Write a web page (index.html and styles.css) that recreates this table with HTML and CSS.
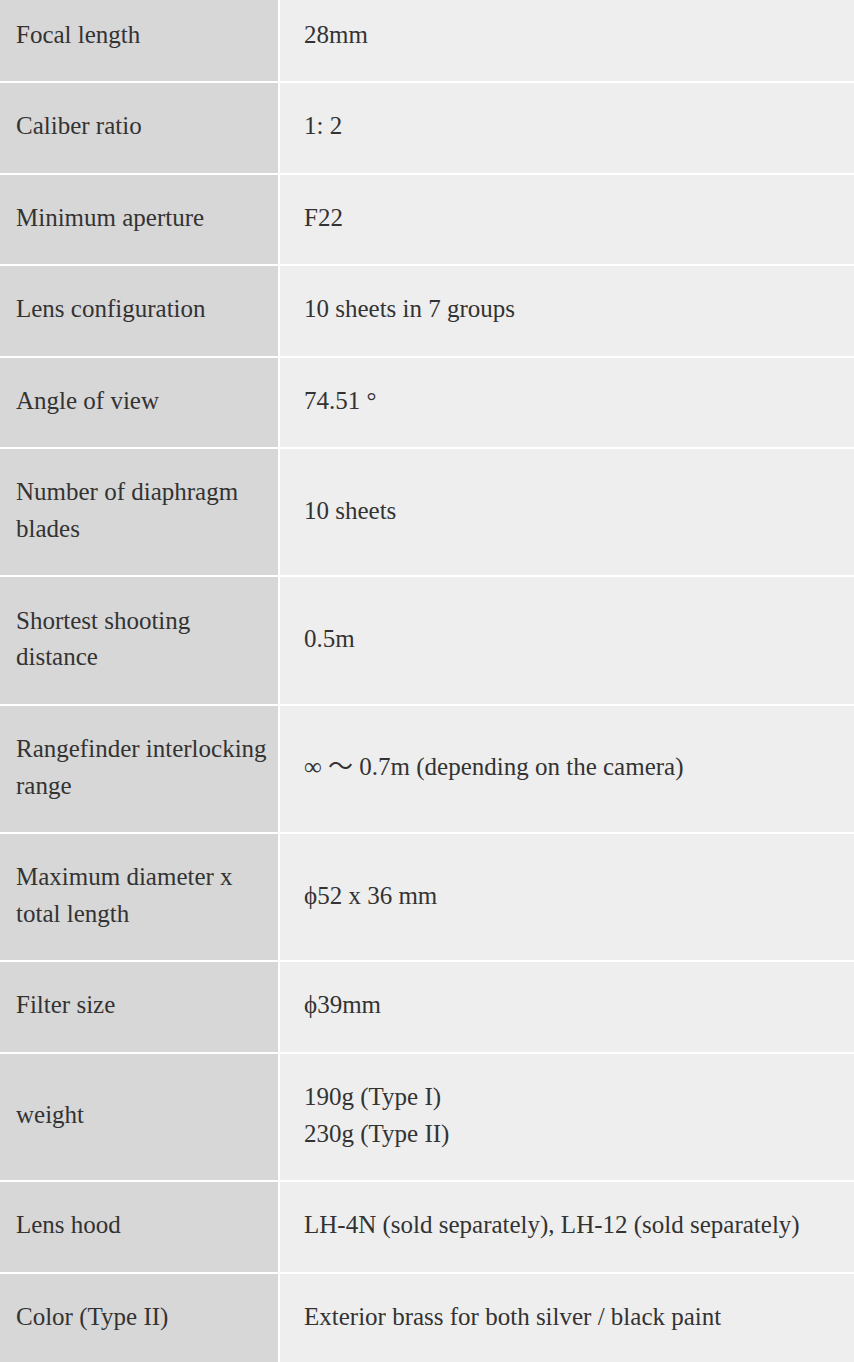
FILE: index.html
```html
<!DOCTYPE html>
<html>
<head>
<meta charset="utf-8">
<link rel="stylesheet" href="styles.css">
</head>
<body>
<div class="spec">
  <div class="k"><span>Focal length</span></div><div class="v"><span>28mm</span></div>
  <div class="k"><span>Caliber ratio</span></div><div class="v"><span>1: 2</span></div>
  <div class="k"><span>Minimum aperture</span></div><div class="v"><span>F22</span></div>
  <div class="k"><span>Lens configuration</span></div><div class="v"><span>10 sheets in 7 groups</span></div>
  <div class="k"><span>Angle of view</span></div><div class="v"><span>74.51 °</span></div>
  <div class="k"><span>Number of diaphragm blades</span></div><div class="v"><span>10 sheets</span></div>
  <div class="k"><span>Shortest shooting distance</span></div><div class="v"><span>0.5m</span></div>
  <div class="k"><span>Rangefinder interlocking range</span></div><div class="v"><span>∞ 〜 0.7m (depending on the camera)</span></div>
  <div class="k"><span>Maximum diameter x total length</span></div><div class="v"><span>ϕ52 x 36 mm</span></div>
  <div class="k"><span>Filter size</span></div><div class="v"><span>ϕ39mm</span></div>
  <div class="k"><span>weight</span></div><div class="v"><span>190g (Type I)<br>230g (Type II)</span></div>
  <div class="k"><span>Lens hood</span></div><div class="v"><span>LH-4N (sold separately), LH-12 (sold separately)</span></div>
  <div class="k"><span>Color (Type II)</span></div><div class="v"><span>Exterior brass for both silver / black paint</span></div>
</div>
</body>
</html>
```
FILE: styles.css
```css
html, body {
  margin: 0;
  padding: 0;
  background: #ffffff;
}
body {
  font-family: "Liberation Serif", "Noto Sans CJK JP", serif;
  font-size: 25px;
  line-height: 36.75px;
  color: #333333;
}
.spec {
  display: grid;
  grid-template-columns: 278px 1fr;
  column-gap: 2px;
  row-gap: 2px;
  background: #ffffff;
  margin-top: -8.55px;
}
.k, .v {
  display: flex;
  align-items: center;
  justify-content: flex-start;
  padding-top: 25.2px;
  padding-bottom: 27.6px;
}
.k {
  background: #d7d7d7;
  padding-left: 16px;
  padding-right: 8px;
}
.v {
  background: #eeeeee;
  padding-left: 24px;
  padding-right: 8px;
}
```
